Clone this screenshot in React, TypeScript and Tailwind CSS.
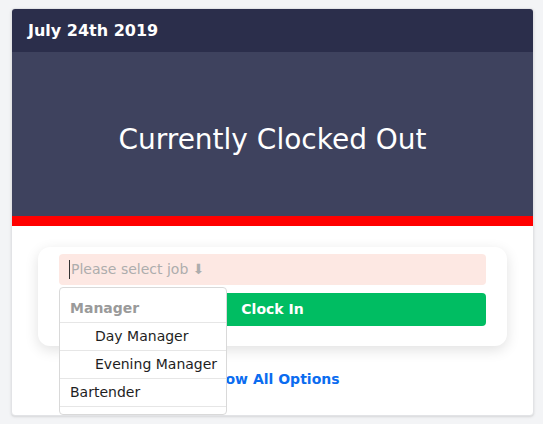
import React from 'react';

const font = { fontFamily: '"DejaVu Sans", "Noto Sans", sans-serif' };

const JobDropdown: React.FC = () => {
  return (
    <div className="absolute left-0 top-[33px] w-[168px] bg-white border border-[#d9d9d9] rounded-[4px] pt-[6px] pb-[7px] z-20 text-[14px]">
      <div className="h-[29px] flex items-center px-[10px] text-[#9a9a9a] font-semibold border-b border-[#e6e6e6]">Manager</div>
      <div className="h-[28px] flex items-center pl-[35px] text-[#1e1e1e] border-b border-[#e6e6e6]">Day Manager</div>
      <div className="h-[28px] flex items-center pl-[35px] text-[#1e1e1e] border-b border-[#e6e6e6]">Evening Manager</div>
      <div className="h-[28px] flex items-center px-[10px] text-[#1e1e1e] border-b border-[#e6e6e6]">Bartender</div>
    </div>
  );
};

const App: React.FC = () => {
  return (
    <div className="min-h-screen bg-[#f3f4f6] pt-[8px] pl-[11px] pr-[9px]" style={font}>
      <div className="bg-white border border-[#e2e3e6] rounded-[4px] overflow-hidden shadow-sm h-[408px] flex flex-col">
        <div className="h-[43px] bg-[#2b2e4b] flex items-center px-[16px] text-white font-bold text-[16px] shrink-0">
          July 24th 2019
        </div>
        <div className="h-[164px] bg-[#3e425e] flex items-center justify-center pt-[12px] shrink-0">
          <h1 className="text-white text-[28px] font-normal">Currently Clocked Out</h1>
        </div>
        <div className="h-[10px] bg-[#ff0000] shrink-0"></div>
        <div className="flex-1 px-[26px] pt-[21px]">
          <div className="bg-white rounded-[12px] shadow-[0_4px_14px_rgba(0,0,0,0.12)] px-[21px] pt-[7px] pb-[20px]">
            <div className="relative">
              <div className="h-[31px] bg-[#fde8e3] rounded-[4px] flex items-center pl-[10px] text-[14px] text-[#adadad]">
                <span className="w-px h-[19px] bg-[#333] mr-[1px]"></span>
                Please select job ⬇
              </div>
              <JobDropdown />
            </div>
            <button className="mt-[8px] w-full h-[33px] bg-[#00bd62] rounded-[4px] text-white font-bold text-[14px]">
              Clock In
            </button>
          </div>
          <div className="mt-[21px] text-center">
            <a className="text-[#0b6cf0] font-semibold text-[14px]">Show All Options</a>
          </div>
        </div>
      </div>
    </div>
  );
};

export default App;
